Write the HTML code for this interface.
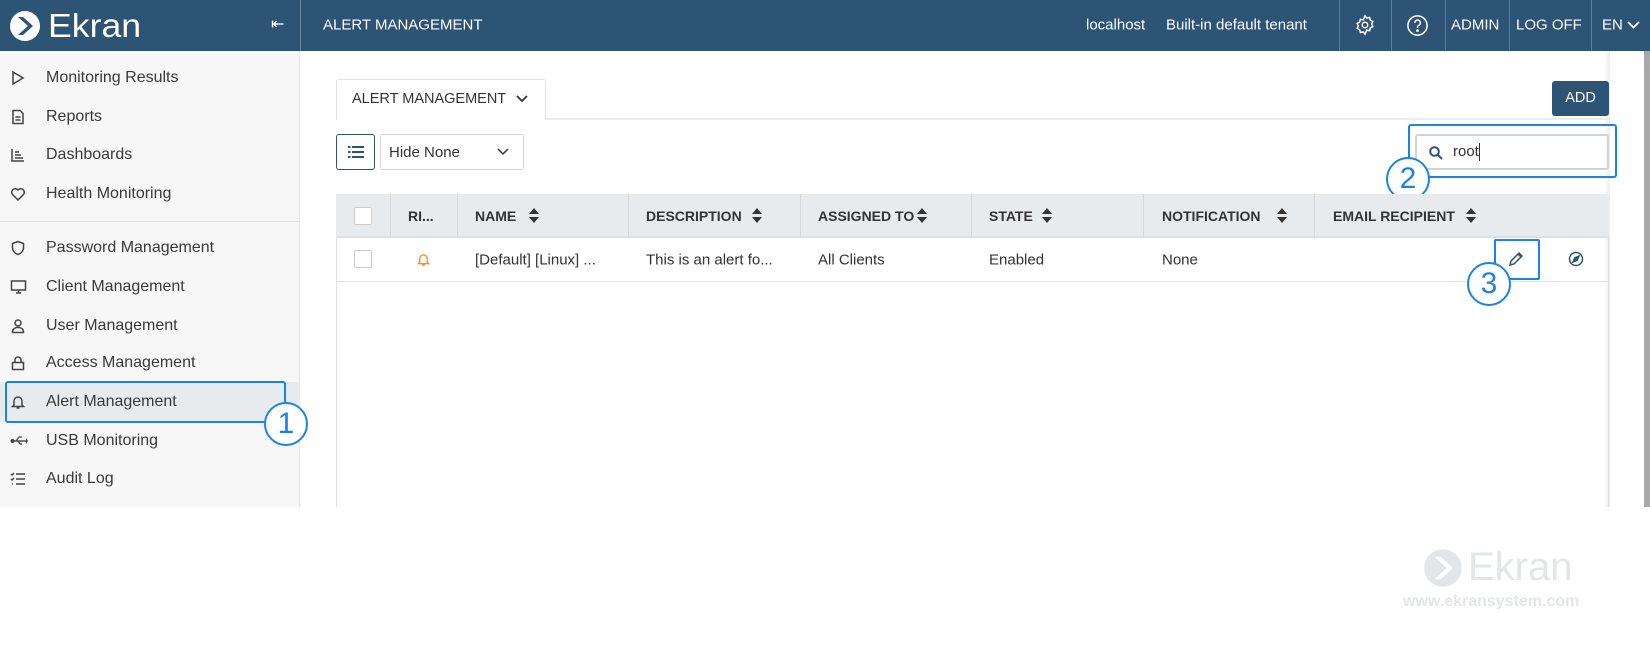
<!DOCTYPE html>
<html><head><meta charset="utf-8"><style>
*{box-sizing:border-box;margin:0;padding:0}
body{width:1650px;height:654px;background:#fff;font-family:"Liberation Sans",sans-serif;color:#333;position:relative;overflow:hidden}
.a{position:absolute}
.hdr{left:0;top:0;width:1650px;height:51px;background:#2e5475;color:#fff}
.side{left:0;top:51px;width:300px;height:456px;background:#f7f7f7;border-right:1px solid #e4e4e4}
.si{position:absolute;left:46px;font-size:16px;color:#3a3a3a;transform:translateY(-50%)}
.ic{position:absolute;left:10px;transform:translateY(-50%)}
.hs{position:absolute;top:0;height:51px;width:1px;background:#5d7d98}
.ht{position:absolute;top:25px;transform:translateY(-50%);font-size:15px;color:#fff}
.th{position:absolute;top:216px;transform:translateY(-50%);font-size:14px;font-weight:bold;color:#333}
.td{position:absolute;top:260px;transform:translateY(-50%);font-size:15px;color:#333}
.cd{position:absolute;top:194px;width:1px;height:44px;background:#d5d9de}
.circ{position:absolute;width:44px;height:44px;border:2.5px solid #1a82e8;border-radius:50%;background:#fff;color:#1a82e8;font-size:30px;text-align:center;line-height:39px}
</style></head><body>
<div class="a hdr">
 <svg class="a" style="left:9px;top:10px" width="32" height="32" viewBox="0 0 32 32"><circle cx="16" cy="16" r="15" fill="#fff"/><path d="M9 7 L19 16 L9 25 L14 25 L24 16 L14 7Z" fill="#2e5475"/></svg>
 <div class="a" style="left:48px;top:7px;font-size:33px;color:#fff;transform:scaleX(1.08);transform-origin:left">Ekran</div>
 <div class="a" style="left:271px;top:14px;font-size:16px;color:#fff">⇤</div>
 <div class="hs" style="left:300px;background:#6e8ba3"></div>
 <div class="ht" style="left:323px">ALERT MANAGEMENT</div>
 <div class="ht" style="left:1086px">localhost</div>
 <div class="ht" style="left:1166px">Built-in default tenant</div>
 <div class="hs" style="left:1339px"></div><div class="hs" style="left:1391px"></div><div class="hs" style="left:1445px"></div><div class="hs" style="left:1509px"></div><div class="hs" style="left:1591px"></div>
 <svg class="a" style="left:1354px;top:14px" width="22" height="22" viewBox="0 0 24 24" fill="none" stroke="#fff" stroke-width="1.6"><circle cx="12" cy="12" r="3"/><path d="M12 2l2 2.5 3-.8.8 3 2.7 1.5-1.2 2.8 1.2 2.8-2.7 1.5-.8 3-3-.8L12 22l-2-2.5-3 .8-.8-3-2.7-1.5L4.7 13 3.5 10.2 6.2 8.7l.8-3 3 .8z"/></svg>
 <svg class="a" style="left:1406px;top:14px" width="23" height="23" viewBox="0 0 24 24" fill="none" stroke="#fff" stroke-width="1.6"><circle cx="12" cy="12" r="10"/><path d="M9.2 9.3a2.9 2.9 0 1 1 4 2.6c-.8.4-1.2 1-1.2 2v.6"/><circle cx="12" cy="17.3" r=".6" fill="#fff"/></svg>
 <div class="ht" style="left:1451px">ADMIN</div>
 <div class="ht" style="left:1516px">LOG OFF</div>
 <div class="ht" style="left:1602px">EN</div>
 <svg class="a" style="left:1627px;top:21px" width="13" height="8" viewBox="0 0 13 8" fill="none" stroke="#fff" stroke-width="1.8"><path d="M1 1l5.5 5.5L12 1"/></svg>
</div>
<div class="a side">
 <div style="position:absolute;left:0;top:170px;width:300px;height:1px;background:#e2e2e2"></div>
 <div style="position:absolute;left:0;top:331px;width:300px;height:40px;background:#e8ebee"></div>
</div>
<div class="a" style="left:0;top:51px;width:300px;height:456px">
 <svg class="ic" style="top:27px" width="16" height="16" viewBox="0 0 16 16" fill="none" stroke="#444" stroke-width="1.5"><path d="M3 2l10 6-10 6z"/></svg><div class="si" style="top:27px">Monitoring Results</div>
 <svg class="ic" style="top:66px" width="16" height="16" viewBox="0 0 16 16" fill="none" stroke="#444" stroke-width="1.5"><path d="M3 1.5h7l3 3v10H3z M5.5 8h5M5.5 11h5"/></svg><div class="si" style="top:66px">Reports</div>
 <svg class="ic" style="top:104px" width="16" height="16" viewBox="0 0 16 16" fill="none" stroke="#444" stroke-width="1.5"><path d="M2 2v12h12M5 5h4M5 8h6M5 11h8"/></svg><div class="si" style="top:104px">Dashboards</div>
 <svg class="ic" style="top:143px" width="16" height="16" viewBox="0 0 16 16" fill="none" stroke="#444" stroke-width="1.5"><path d="M8 14L2.5 8.5A3.2 3.2 0 0 1 8 4a3.2 3.2 0 0 1 5.5 4.5z"/></svg><div class="si" style="top:143px">Health Monitoring</div>
 <svg class="ic" style="top:197px" width="16" height="16" viewBox="0 0 16 16" fill="none" stroke="#444" stroke-width="1.5"><path d="M8 1.5l5.5 2v4c0 3.5-2.5 6-5.5 7-3-1-5.5-3.5-5.5-7v-4z"/></svg><div class="si" style="top:197px">Password Management</div>
 <svg class="ic" style="top:236px" width="17" height="16" viewBox="0 0 17 16" fill="none" stroke="#444" stroke-width="1.5"><rect x="1.5" y="2" width="14" height="9"/><path d="M6 14h5M8.5 11v3"/></svg><div class="si" style="top:236px">Client Management</div>
 <svg class="ic" style="top:275px" width="16" height="16" viewBox="0 0 16 16" fill="none" stroke="#444" stroke-width="1.5"><circle cx="8" cy="5" r="3"/><path d="M2.5 14.5v-1a4 3 0 0 1 11 0v1z"/></svg><div class="si" style="top:275px">User Management</div>
 <svg class="ic" style="top:312px" width="16" height="16" viewBox="0 0 16 16" fill="none" stroke="#444" stroke-width="1.5"><rect x="2.5" y="7.5" width="11" height="7"/><path d="M5 7.5V5a3 3 0 0 1 6 0v2.5"/></svg><div class="si" style="top:312px">Access Management</div>
 <svg class="ic" style="top:351px" width="16" height="16" viewBox="0 0 16 16" fill="none" stroke="#444" stroke-width="1.5"><path d="M4 11V7a4 4 0 0 1 8 0v4l1.5 1.5h-11z M6.5 14h3"/></svg><div class="si" style="top:351px">Alert Management</div>
 <svg class="ic" style="top:390px" width="18" height="14" viewBox="0 0 18 14" fill="#444"><circle cx="2.5" cy="7" r="2"/><rect x="3" y="6.3" width="13" height="1.4"/><path d="M16 4v6l2-3z"/><path d="M6 7l3-4h3" stroke="#444" fill="none" stroke-width="1.3"/><path d="M8 7l2 3h2" stroke="#444" fill="none" stroke-width="1.3"/></svg><div class="si" style="top:390px">USB Monitoring</div>
 <svg class="ic" style="top:428px" width="16" height="16" viewBox="0 0 16 16" fill="none" stroke="#444" stroke-width="1.5"><path d="M1 3l1 1 2-2M1 8l1 1 2-2M6 3h9M6 8h9M6 13h9M2 13h1"/></svg><div class="si" style="top:428px">Audit Log</div>
</div>
<div class="a" style="left:5px;top:381px;width:281px;height:42px;border:2.5px solid #1a82e8;border-radius:3px"></div>
<div class="circ" style="left:264px;top:402px">1</div>

<div class="a" style="left:1604px;top:51px;width:6px;height:456px;background:linear-gradient(90deg,#fff,#ececec)"></div>
<div class="a" style="left:1644px;top:51px;width:6px;height:456px;background:#a8a8a8"></div>
<div class="a" style="left:336px;top:118px;width:1273px;height:2px;background:#ececec"></div>
<div class="a" style="left:336px;top:79px;width:210px;height:41px;background:#fff;border:1px solid #e3e3e3;border-bottom:none;border-radius:3px 3px 0 0;font-size:14.5px;color:#333;padding:11px 0 0 15px">ALERT MANAGEMENT</div>
<svg class="a" style="left:516px;top:95px" width="12" height="8" viewBox="0 0 12 8" fill="none" stroke="#333" stroke-width="1.8"><path d="M1 1l5 5 5-5"/></svg>
<div class="a" style="left:1552px;top:81px;width:57px;height:35px;background:#2e5475;border-radius:3px;color:#fff;font-size:14.5px;text-align:center;line-height:35px">ADD</div>
<div class="a" style="left:336px;top:134px;width:39px;height:36px;border:1px solid #2e5475;border-radius:3px">
 <svg style="position:absolute;left:11px;top:10px" width="16" height="14" viewBox="0 0 16 14" fill="#2e5475"><rect x="0" y="1" width="2.5" height="2"/><rect x="4" y="1" width="12" height="2"/><rect x="0" y="6" width="2.5" height="2"/><rect x="4" y="6" width="12" height="2"/><rect x="0" y="11" width="2.5" height="2"/><rect x="4" y="11" width="12" height="2"/></svg></div>
<div class="a" style="left:380px;top:134px;width:144px;height:36px;border:1px solid #d4d4d4;border-radius:3px;font-size:15px;padding:9px 0 0 8px">Hide None</div>
<svg class="a" style="left:497px;top:148px" width="12" height="8" viewBox="0 0 12 8" fill="none" stroke="#333" stroke-width="1.5"><path d="M1 1l5 5 5-5"/></svg>
<div class="a" style="left:1415px;top:134px;width:194px;height:36px;border:2px solid #cbd3db;border-radius:3px;font-size:15px;padding:7px 0 0 36px">root<span style="display:inline-block;width:1px;height:18px;background:#333;vertical-align:middle"></span>
 <svg style="position:absolute;left:12px;top:10px" width="14" height="14" viewBox="0 0 14 14" fill="none" stroke="#2e5475" stroke-width="2"><circle cx="5.5" cy="5.5" r="4.3"/><path d="M8.8 8.8L13 13"/></svg></div>
<div class="a" style="left:1408px;top:124px;width:209px;height:54px;border:2.5px solid #1a82e8;border-radius:3px"></div>
<div class="circ" style="left:1386px;top:157px">2</div>

<div class="a" style="left:336px;top:194px;width:1273px;height:313px;border:1px solid #e0e0e0;border-bottom:none"></div>
<div class="a" style="left:336px;top:194px;width:1273px;height:44px;background:#e8ebee;border-bottom:2px solid #dcdfe3"></div>
<div class="a" style="left:336px;top:281px;width:1273px;height:1px;background:#e3e3e3"></div>
<div class="cd" style="left:390px"></div><div class="cd" style="left:457px"></div><div class="cd" style="left:628px"></div><div class="cd" style="left:800px"></div><div class="cd" style="left:971px"></div><div class="cd" style="left:1143px"></div><div class="cd" style="left:1314px"></div>
<div class="a" style="left:354px;top:207px;width:18px;height:18px;background:#fff;border:1px solid #ccc;border-radius:2px"></div>
<div class="a" style="left:354px;top:250px;width:18px;height:18px;background:#fff;border:1px solid #ccc;border-radius:2px"></div>
<div class="th" style="left:408px">RI...</div>
<div class="th" style="left:475px">NAME</div>
<div class="th" style="left:646px">DESCRIPTION</div>
<div class="th" style="left:818px">ASSIGNED TO</div>
<div class="th" style="left:989px">STATE</div>
<div class="th" style="left:1162px">NOTIFICATION</div>
<div class="th" style="left:1333px">EMAIL RECIPIENT</div>
<svg class="a" style="left:529px;top:208px" width="10" height="15" viewBox="0 0 10 15" fill="#333"><path d="M5 0l5 6H0zM5 15L0 9h10z"/></svg>
<svg class="a" style="left:752px;top:208px" width="10" height="15" viewBox="0 0 10 15" fill="#333"><path d="M5 0l5 6H0zM5 15L0 9h10z"/></svg>
<svg class="a" style="left:917px;top:208px" width="10" height="15" viewBox="0 0 10 15" fill="#333"><path d="M5 0l5 6H0zM5 15L0 9h10z"/></svg>
<svg class="a" style="left:1042px;top:208px" width="10" height="15" viewBox="0 0 10 15" fill="#333"><path d="M5 0l5 6H0zM5 15L0 9h10z"/></svg>
<svg class="a" style="left:1277px;top:208px" width="10" height="15" viewBox="0 0 10 15" fill="#333"><path d="M5 0l5 6H0zM5 15L0 9h10z"/></svg>
<svg class="a" style="left:1466px;top:208px" width="10" height="15" viewBox="0 0 10 15" fill="#333"><path d="M5 0l5 6H0zM5 15L0 9h10z"/></svg>
<svg class="a" style="left:416px;top:252px" width="15" height="15" viewBox="0 0 16 16" fill="none" stroke="#f0962a" stroke-width="1.5"><path d="M4 11V7a4 4 0 0 1 8 0v4l1.5 1.5h-11z M6.5 14h3"/></svg>
<div class="td" style="left:475px">[Default] [Linux] ...</div>
<div class="td" style="left:646px">This is an alert fo...</div>
<div class="td" style="left:818px">All Clients</div>
<div class="td" style="left:989px">Enabled</div>
<div class="td" style="left:1162px">None</div>
<svg class="a" style="left:1508px;top:251px" width="16" height="16" viewBox="0 0 16 16" fill="none" stroke="#2e5475" stroke-width="1.5"><path d="M2 14l1-4 8-8 3 3-8 8zM10 3l3 3"/></svg>
<svg class="a" style="left:1568px;top:251px" width="16" height="16" viewBox="0 0 16 16" fill="none" stroke="#2e5475" stroke-width="1.5"><circle cx="8" cy="8" r="6.5"/><path d="M5 11l1.8-4.2L11 5 9.2 9.2z" fill="#2e5475"/></svg>
<div class="a" style="left:1494px;top:239px;width:46px;height:41px;border:2.5px solid #1a82e8;border-radius:2px"></div>
<div class="circ" style="left:1467px;top:262px">3</div>

<svg class="a" style="left:1423px;top:548px" width="40" height="40" viewBox="0 0 32 32"><circle cx="16" cy="16" r="15" fill="#e3e5e8"/><path d="M9 7 L19 16 L9 25 L14 25 L24 16 L14 7Z" fill="#fff"/></svg>
<div class="a" style="left:1468px;top:545px;font-size:40px;color:#e3e5e8">Ekran</div>
<div class="a" style="left:1403px;top:593px;font-size:16px;font-weight:bold;color:#e3e5e8">www.ekransystem.com</div>
</body></html>
